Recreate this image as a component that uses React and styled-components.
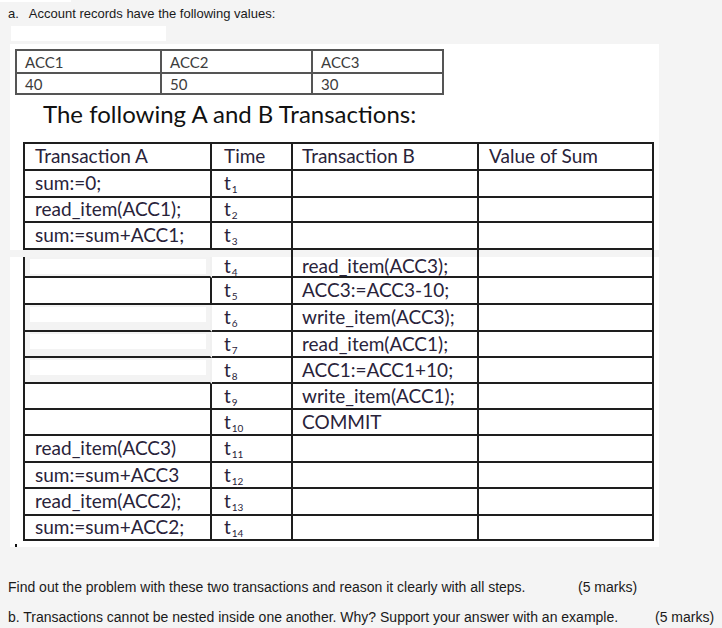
import React from 'react';
import styled, { createGlobalStyle } from 'styled-components';

const GlobalStyle = createGlobalStyle`
  html, body {
    margin: 0;
    padding: 0;
    background: #f4f4f4;
  }
  body {
    font-family: "Liberation Sans", Arial, sans-serif;
    color: #1a1a1a;
  }
`;

const Page = styled.div`
  width: 722px;
  height: 628px;
  overflow: hidden;
`;

const TopEdge = styled.div`
  width: 71px;
  height: 2px;
  background: #fff;
`;

const Question = styled.p`
  margin: ${(p) => p.top}px 0 0;
  padding-left: 8px;
  font-size: ${(p) => p.size || 13}px;
  line-height: 16px;
  display: grid;
  grid-template-columns: ${(p) => (p.tab ? `${p.tab}px auto` : 'auto')};
  white-space: nowrap;
`;

const Label = styled.span`
  display: inline-block;
  margin-right: ${(p) => p.gap}px;
`;

const Blank = styled.div`
  width: 155px;
  height: 15px;
  margin: 4px 0 0 11px;
  background: #fff;
`;

const Panel = styled.div`
  box-sizing: border-box;
  width: 649px;
  height: 503px;
  margin: 3px 0 0 10px;
  padding: 5px 0 0 5px;
  background: #fff;
  font-family: Lato, "Open Sans", sans-serif;
`;

/* account values */
const AccTable = styled.div`
  width: 429px;
  border-top: 2px solid #555;
`;

const AccRow = styled.div`
  display: grid;
  grid-template-columns: 145px 151px 131px;
  grid-template-rows: 100%;
  height: ${(p) => p.h}px;
  border-left: 2px solid #555;
`;

const AccCell = styled.div`
  box-sizing: border-box;
  display: flex;
  align-items: center;
  padding-left: 8px;
  border-right: 2px solid #555;
  border-bottom: 2px solid #555;
  font-size: 15px;
  line-height: 18px;
  color: #3c3c3c;
`;

const Heading = styled.h2`
  margin: 5px 0 0 28px;
  font-size: 24px;
  line-height: 28px;
  font-weight: 400;
  color: #111;
`;

/* transactions */
const Table = styled.div`
  width: 631px;
  margin: 14px 0 0 8px;
  border-top: 2px solid #1e1e1e;
  display: flex;
  flex-direction: column;
`;

const Row = styled.div`
  display: grid;
  grid-template-columns: 187px 81px 186px 175px;
  grid-template-rows: 100%;
  height: ${(p) => p.h}px;
  border-left: 2px solid #1e1e1e;
`;

const Cell = styled.div`
  box-sizing: border-box;
  min-height: 0;
  display: flex;
  align-items: center;
  padding: 0 0 1px ${(p) => p.pad ?? 10}px;
  border-right: 2px solid ${(p) => (p.blank ? '#f0f0f0' : '#1e1e1e')};
  border-bottom: 2px solid #1e1e1e;
  background: ${(p) => (p.blank ? '#f3f3f3' : '#fff')};
  font-size: 19px;
  line-height: 18px;
  color: #29233a;
  white-space: nowrap;
`;

const Patch = styled.div`
  align-self: flex-start;
  width: 176px;
  height: 15px;
  margin: 2px 0 0 -5px;
  background: #fff;
`;

const Band = styled.div`
  display: grid;
  grid-template-columns: 15px 187px 81px 186px 175px 5px;
  height: 7px;
  margin: 0 -5px 0 -13px;
  background: #f4f4f4;
`;

const Tick = styled.div`
  border-right: 2px solid ${(p) => (p.on ? '#1e1e1e' : 'transparent')};
`;

const TimeMark = styled.span`
  display: inline-block;
`;

const Sub = styled.span`
  display: inline-block;
  font-size: 10px;
  line-height: 10px;
  transform: translateY(3px);
  margin-left: 1px;
`;

const Dot = styled.div`
  width: 2px;
  height: 3px;
  margin: 3px 0 0 0;
  background: #111;
`;

const rows = [
  { a: 'sum:=0;', t: '1', h: 27 },
  { a: 'read_item(ACC1);', t: '2', h: 25 },
  { a: 'sum:=sum+ACC1;', t: '3', h: 27 },
  { band: true },
  { blank: true, t: '4', b: 'read_item(ACC3);', h: 21 },
  { t: '5', b: 'ACC3:=ACC3-10;', h: 27 },
  { blank: true, t: '6', b: 'write_item(ACC3);', h: 27 },
  { blank: true, t: '7', b: 'read_item(ACC1);', h: 26 },
  { blank: true, t: '8', b: 'ACC1:=ACC1+10;', h: 26 },
  { t: '9', b: 'write_item(ACC1);', h: 26 },
  { t: '10', b: 'COMMIT', h: 26 },
  { a: 'read_item(ACC3)', t: '11', h: 27 },
  { a: 'sum:=sum+ACC3', t: '12', h: 26 },
  { a: 'read_item(ACC2);', t: '13', h: 27 },
  { a: 'sum:=sum+ACC2;', t: '14', h: 25 },
];

const App = () => (
  <Page>
    <GlobalStyle />
    <TopEdge />
    <Question top={4}>
      <span>
        <Label gap={10}>a.</Label>Account records have the following values:
      </span>
    </Question>
    <Blank />

    <Panel>
      <AccTable>
        <AccRow h={23}>
          <AccCell>ACC1</AccCell>
          <AccCell>ACC2</AccCell>
          <AccCell>ACC3</AccCell>
        </AccRow>
        <AccRow h={21}>
          <AccCell>40</AccCell>
          <AccCell>50</AccCell>
          <AccCell>30</AccCell>
        </AccRow>
      </AccTable>

      <Heading>The following A and B Transactions:</Heading>

      <Table>
        <Row h={27}>
          <Cell>Transaction A</Cell>
          <Cell pad={12}>Time</Cell>
          <Cell pad={9}>Transaction B</Cell>
          <Cell>Value of Sum</Cell>
        </Row>
        {rows.map((r, i) =>
          r.band ? (
            <Band key={i}>
              <Tick />
              <Tick />
              <Tick on />
              <Tick on />
              <Tick on />
              <Tick />
            </Band>
          ) : (
            <Row key={i} h={r.h}>
              <Cell blank={r.blank}>{r.blank ? <Patch /> : r.a}</Cell>
              <Cell pad={12}>
                <TimeMark>
                  t<Sub>{r.t}</Sub>
                </TimeMark>
              </Cell>
              <Cell pad={9}>{r.b}</Cell>
              <Cell />
            </Row>
          )
        )}
      </Table>
      <Dot />
    </Panel>

    <Question top={32} tab={570} size={14}>
      <span>Find out the problem with these two transactions and reason it clearly with all steps.</span>
      <span>(5 marks)</span>
    </Question>
    <Question top={14} tab={647} size={14}>
      <span>b. Transactions cannot be nested inside one another. Why? Support your answer with an example.</span>
      <span>(5 marks)</span>
    </Question>
  </Page>
);

export default App;
